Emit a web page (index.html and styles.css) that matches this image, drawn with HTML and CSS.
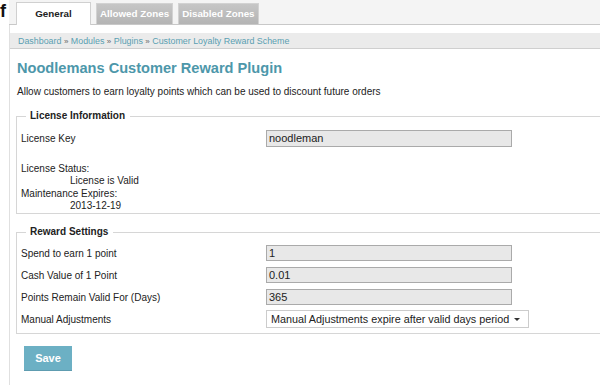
FILE: index.html
```html
<!DOCTYPE html>
<html>
<head>
<meta charset="utf-8">
<link rel="stylesheet" href="styles.css">
</head>
<body>
<div class="wrap">
  <div class="edge"><span class="f">f</span></div>
  <div class="main">
    <div class="tabs">
      <div class="tab active">General</div>
      <div class="tab">Allowed Zones</div>
      <div class="tab">Disabled Zones</div>
    </div>
    <div class="content">
      <div class="crumbs">
        <a>Dashboard</a> <span class="sep">»</span> <a>Modules</a> <span class="sep">»</span> <a>Plugins</a> <span class="sep">»</span> <a>Customer Loyalty Reward Scheme</a>
      </div>
      <h1 class="title">Noodlemans Customer Reward Plugin</h1>
      <p class="desc">Allow customers to earn loyalty points which can be used to discount future orders</p>

      <fieldset class="box">
        <legend>License Information</legend>
        <div class="row">
          <label>License Key</label>
          <div class="field">noodleman</div>
        </div>
        <div class="status">
          <div>License Status:</div>
          <div class="ind">License is Valid</div>
          <div>Maintenance Expires:</div>
          <div class="ind">2013-12-19</div>
        </div>
      </fieldset>

      <fieldset class="box box2">
        <legend>Reward Settings</legend>
        <div class="row r1">
          <label>Spend to earn 1 point</label>
          <div class="field">1</div>
        </div>
        <div class="row r2">
          <label>Cash Value of 1 Point</label>
          <div class="field">0.01</div>
        </div>
        <div class="row r3">
          <label>Points Remain Valid For (Days)</label>
          <div class="field">365</div>
        </div>
        <div class="row r4">
          <label>Manual Adjustments</label>
          <div class="select">Manual Adjustments expire after valid days period <span class="arrow"></span></div>
        </div>
      </fieldset>

      <div class="actions"><button class="save">Save</button></div>
    </div>
  </div>
</div>
</body>
</html>
```
FILE: styles.css
```css
html, body {
  margin: 0;
  padding: 0;
  width: 600px;
  height: 385px;
  overflow: hidden;
  background: #fff;
}
body {
  font-family: "Liberation Sans", Arial, sans-serif;
  color: #222;
}
.wrap {
  display: flex;
  height: 385px;
}
.edge {
  width: 9px;
  flex: none;
}
.f {
  display: block;
  font-weight: bold;
  font-size: 18px;
  line-height: 18px;
  margin-top: 2px;
  margin-left: 0;
  color: #111;
}
.main {
  flex: none;
  width: 700px;
  display: flex;
  flex-direction: column;
}
.tabs {
  height: 24px;
  background: #f4f4f4;
  border-bottom: 1px solid #c8c8c8;
  display: flex;
  align-items: flex-end;
  gap: 5px;
  padding-left: 7px;
  box-sizing: content-box;
}
.tab {
  height: 21px;
  box-sizing: border-box;
  border: 1px solid #d2d2d2;
  border-bottom: none;
  background: linear-gradient(#c6c6c6, #b4b4b4);
  color: #fff;
  font-size: 9.8px;
  font-weight: bold;
  line-height: 20px;
  padding: 0 3px;
}
.tab.active {
  height: 23px;
  width: 75px;
  text-align: center;
  background: #fff;
  color: #222;
  margin-bottom: -1px;
  line-height: 21px;
  border-color: #d0d0d0;
}
.content {
  flex: 1;
  border-left: 1px solid #e0e0e0;
  padding-top: 8px;
}
.crumbs {
  height: 15px;
  background: #ebebeb;
  border-bottom: 1px solid #cfcfcf;
  font-size: 8.9px;
  line-height: 16px;
  color: #5a9fb2;
  padding-left: 8px;
}
.crumbs a { color: #5a9fb2; }
.crumbs .sep { font-size: 8px; color: #666; }
.title {
  margin: 10px 0 0 7px;
  font-size: 14.6px;
  line-height: 18px;
  color: #4d97aa;
  font-weight: bold;
}
.desc {
  margin: 9px 0 0 7px;
  font-size: 10px;
  line-height: 12px;
  color: #222;
}
.box {
  margin: 12px 0 0 6px;
  border: 1px solid #d6d6d6;
  padding: 0 0 0 4px;
  min-width: 0;
  height: 102px;
  box-sizing: content-box;
}
.box legend {
  font-size: 10px;
  font-weight: bold;
  padding: 0 5px 0 4px;
  margin-left: 5px;
  line-height: 12px;
  color: #222;
}
.row {
  display: flex;
  align-items: center;
  font-size: 10px;
  height: 18px;
}
.row label {
  width: 245px;
  flex: none;
}
.field {
  width: 246px;
  height: 17px;
  box-sizing: border-box;
  border: 1px solid #aaa;
  background: #e8e8e8;
  font-size: 11px;
  line-height: 15px;
  padding-left: 2px;
  color: #222;
}
.box > .row:first-of-type { margin-top: 7px; }
.status {
  margin-top: 16px;
  font-size: 10px;
  line-height: 12.3px;
}
.status .ind { padding-left: 49px; }
.box2 {
  margin-top: 12px;
  height: 106px;
}
.box2 > .row.r1 { margin-top: 6px; }
.box2 .r2 { margin-top: 4px; }
.box2 .r3 { margin-top: 4px; }
.box2 .r4 { margin-top: 4px; }
.box2 .field { height: 16px; line-height: 14px; }
.select {
  height: 18px;
  box-sizing: border-box;
  border: 1px solid #ccc;
  background: #fff;
  font-size: 10.8px;
  line-height: 16px;
  padding: 0 8px 0 4px;
  display: flex;
  align-items: center;
  gap: 5px;
  white-space: nowrap;
}
.arrow {
  width: 0;
  height: 0;
  border-left: 3px solid transparent;
  border-right: 3px solid transparent;
  border-top: 3px solid #333;
}
.actions {
  padding: 12px 0 0 14px;
}
.save {
  width: 48px;
  height: 25px;
  border: none;
  border-bottom: 1px solid #5e9cb0;
  background: #6cb0c4;
  color: #fff;
  font-family: "Liberation Sans", Arial, sans-serif;
  font-weight: bold;
  font-size: 11px;
  padding: 0;
}
```
